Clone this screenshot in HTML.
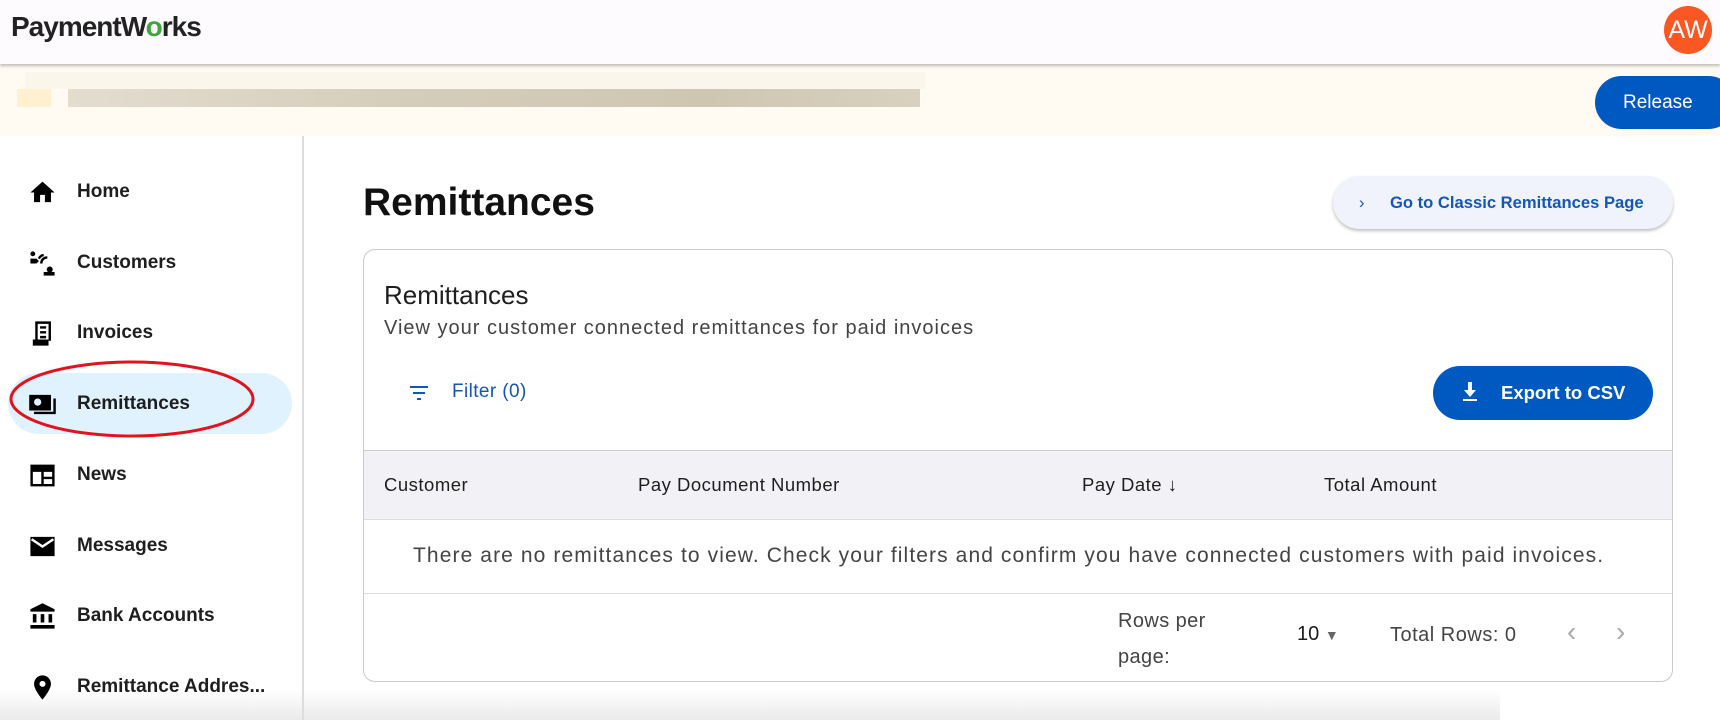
<!DOCTYPE html>
<html><head><meta charset="utf-8"><style>
*{margin:0;padding:0;box-sizing:border-box}
body{width:1720px;height:720px;overflow:hidden;background:#fff;font-family:"Liberation Sans",sans-serif;position:relative;color:#1c1b1f}
.abs{position:absolute}
.hdr{left:0;top:0;width:1720px;height:64px;background:#fdfbfe;box-shadow:0 2px 3px rgba(0,0,0,.25);z-index:2}
.logo{left:11px;top:11px;font-size:28px;font-weight:bold;letter-spacing:-1px;color:#222}
.av{left:1664px;top:6px;width:48px;height:48px;border-radius:50%;background:#fb5722;color:#fff;font-size:25px;text-align:center;line-height:48px}
.ban{left:0;top:64px;width:1720px;height:72px;background:#fffaf2}
.rel{left:1595px;top:76px;width:140px;height:53px;border-radius:27px;background:#0059c1;color:#fff;font-size:19px;line-height:53px;padding-left:28px}
.side{left:302px;top:136px;width:2px;height:584px;background:#ddd}
.nav{left:0;width:300px;height:50px;font-size:19px;font-weight:bold;color:#1e1e1e}
.nav svg{position:absolute;left:28px;top:11px}
.nav span{position:absolute;left:77px;top:14px}
.h1{left:363px;top:181px;font-size:39px;font-weight:bold;color:#111}
.cls{left:1333px;top:176px;width:340px;height:53px;border-radius:27px;background:#f0f3fb;box-shadow:0 2px 3px rgba(0,0,0,.25);color:#1556b5;font-size:16.6px;font-weight:bold;line-height:53px;padding-left:57px}
.card{left:363px;top:249px;width:1310px;height:433px;border:1px solid #c9c9cf;border-radius:12px;overflow:hidden}
.blue{color:#1556b5}
.th{position:absolute;top:224px;font-size:18.5px;letter-spacing:.5px;color:#1e1e1e}
</style></head><body>
<div class="abs hdr"><div class="abs logo">PaymentW<span style="color:#3aa83a">o</span>rks</div><div class="abs av">AW</div></div>
<div class="abs ban">
 <div class="abs" style="left:25px;top:8px;width:900px;height:17px;background:#fbf6ec"></div>
 <div class="abs" style="left:17px;top:25px;width:34px;height:18px;background:#fff0cf"></div>
 <div class="abs" style="left:68px;top:25px;width:852px;height:18px;background:linear-gradient(90deg,#e3ddd0,#d5cdbb 40%,#cfc6b2 75%,#d8d1c0)"></div>
 <div class="abs rel" style="top:12px">Release</div>
</div>
<div class="abs side"></div>
<div class="abs" style="left:8px;top:373px;width:284px;height:61px;border-radius:31px;background:#e0f2fd"></div>
<div class="abs nav" style="top:167px"><svg width="29" height="29" viewBox="0 0 24 24"><path d="M10 20v-6h4v6h5v-8h3L12 3 2 12h3v8z"/></svg><span>Home</span></div>
<div class="abs nav" style="top:238px"><svg width="29" height="29" viewBox="0 0 24 24"><circle cx="4" cy="4" r="2"/><path d="M2 8h5l2 2-2 2H2z"/><path d="M9 8a5 5 0 0 1 4-3" stroke="#000" stroke-width="2" fill="none"/><path d="M11 12c0-3 2-5 5-5" stroke="#000" stroke-width="2" fill="none"/><circle cx="18" cy="17" r="2.5"/><path d="M13 19h9v3h-9z"/></svg><span>Customers</span></div>
<div class="abs nav" style="top:308px"><svg width="29" height="29" viewBox="0 0 24 24"><path d="M6 2h13v16h-2V4H8v13H6z M4 17h13v5H4z M10 6h5v2h-5z M10 10h5v2h-5z M10 14h5v2h-5z"/></svg><span>Invoices</span></div>
<div class="abs nav" style="top:379px"><svg width="29" height="29" viewBox="0 0 24 24"><path d="M1 4h18v13H1z" /><circle cx="8" cy="10" r="3" fill="#e0f2fd"/><path d="M21 7h2v13H5v-2h16z"/></svg><span>Remittances</span></div>
<div class="abs nav" style="top:450px"><svg width="29" height="29" viewBox="0 0 24 24"><path d="M2 3h20v18H2z M4 9v10h7V9z M13 9v4h7V9z M13 15v4h7v-4z" fill-rule="evenodd"/></svg><span>News</span></div>
<div class="abs nav" style="top:521px"><svg width="29" height="29" viewBox="0 0 24 24"><path d="M2 4h20v16H2z"/><path d="M3 6l9 6 9-6" stroke="#fff" stroke-width="2" fill="none"/></svg><span>Messages</span></div>
<div class="abs nav" style="top:591px"><svg width="29" height="29" viewBox="0 0 24 24"><path d="M12 1l10 5v2H2V6z M4 10h3v7H4z M10.5 10h3v7h-3z M17 10h3v7h-3z M2 19h20v3H2z"/></svg><span>Bank Accounts</span></div>
<div class="abs nav" style="top:662px"><svg width="29" height="29" viewBox="0 0 24 24"><path d="M12 2a7 7 0 0 0-7 7c0 5 7 13 7 13s7-8 7-13a7 7 0 0 0-7-7zm0 9.5a2.5 2.5 0 1 1 0-5 2.5 2.5 0 0 1 0 5z"/></svg><span>Remittance Addres...</span></div>
<svg class="abs" style="left:8px;top:358px" width="260" height="84"><ellipse cx="124" cy="41" rx="121" ry="37" fill="none" stroke="#e0141e" stroke-width="3"/></svg>
<div class="abs h1">Remittances</div>
<div class="abs cls"><span style="position:absolute;left:26px;font-weight:normal">›</span>Go to Classic Remittances Page</div>
<div class="abs card">
 <div class="abs" style="left:20px;top:30px;font-size:26px;color:#1e1e1e">Remittances</div>
 <div class="abs" style="left:20px;top:67px;font-size:20px;letter-spacing:1px;color:#444">View your customer connected remittances for paid invoices</div>
 <svg class="abs" style="left:45px;top:135px" width="20" height="16" viewBox="0 0 20 16"><path d="M1 2h18M4 8h12M8 14h4" stroke="#1556b5" stroke-width="2"/></svg>
 <div class="abs blue" style="left:88px;top:131px;font-size:19px;letter-spacing:.4px">Filter (0)</div>
 <div class="abs" style="left:1069px;top:116px;width:220px;height:54px;border-radius:27px;background:#0059c1;color:#fff;font-size:18.5px;font-weight:bold;line-height:54px;padding-left:68px">Export to CSV
  <svg style="position:absolute;left:29px;top:16px" width="16" height="20" viewBox="0 0 16 20"><path d="M6 0h4v8h4l-6 7-6-7h4z M1 17h14v2H1z" fill="#fff"/></svg></div>
 <div class="abs" style="left:0;top:200px;width:1310px;height:70px;background:#f2f1f5;border-top:1px solid #ccc;border-bottom:1px solid #ddd"></div>
 <div class="abs" style="left:0;top:343px;width:1310px;height:1px;background:#ddd"></div>
 <div class="th" style="left:20px">Customer</div>
 <div class="th" style="left:274px">Pay Document Number</div>
 <div class="th" style="left:718px">Pay Date ↓</div>
 <div class="th" style="left:960px">Total Amount</div>
 <div class="abs" style="left:49px;top:294px;font-size:21px;letter-spacing:1.1px;color:#444">There are no remittances to view. Check your filters and confirm you have connected customers with paid invoices.</div>
 <div class="abs" style="left:754px;top:353px;font-size:20px;letter-spacing:.4px;color:#444;line-height:36px">Rows per<br>page:</div>
 <div class="abs" style="left:933px;top:373px;font-size:20px">10 <span style="font-size:14px;color:#666">▼</span></div>
 <div class="abs" style="left:1026px;top:374px;font-size:20px;letter-spacing:.5px;color:#444">Total Rows: 0</div>
 <div class="abs" style="left:1203px;top:366px;font-size:28px;color:#aaa">‹</div>
 <div class="abs" style="left:1252px;top:366px;font-size:28px;color:#aaa">›</div>
</div>
<div class="abs" style="left:0;top:690px;width:1500px;height:30px;background:linear-gradient(180deg,rgba(235,235,235,0),rgba(225,225,225,.7));z-index:-1"></div>
</body></html>
